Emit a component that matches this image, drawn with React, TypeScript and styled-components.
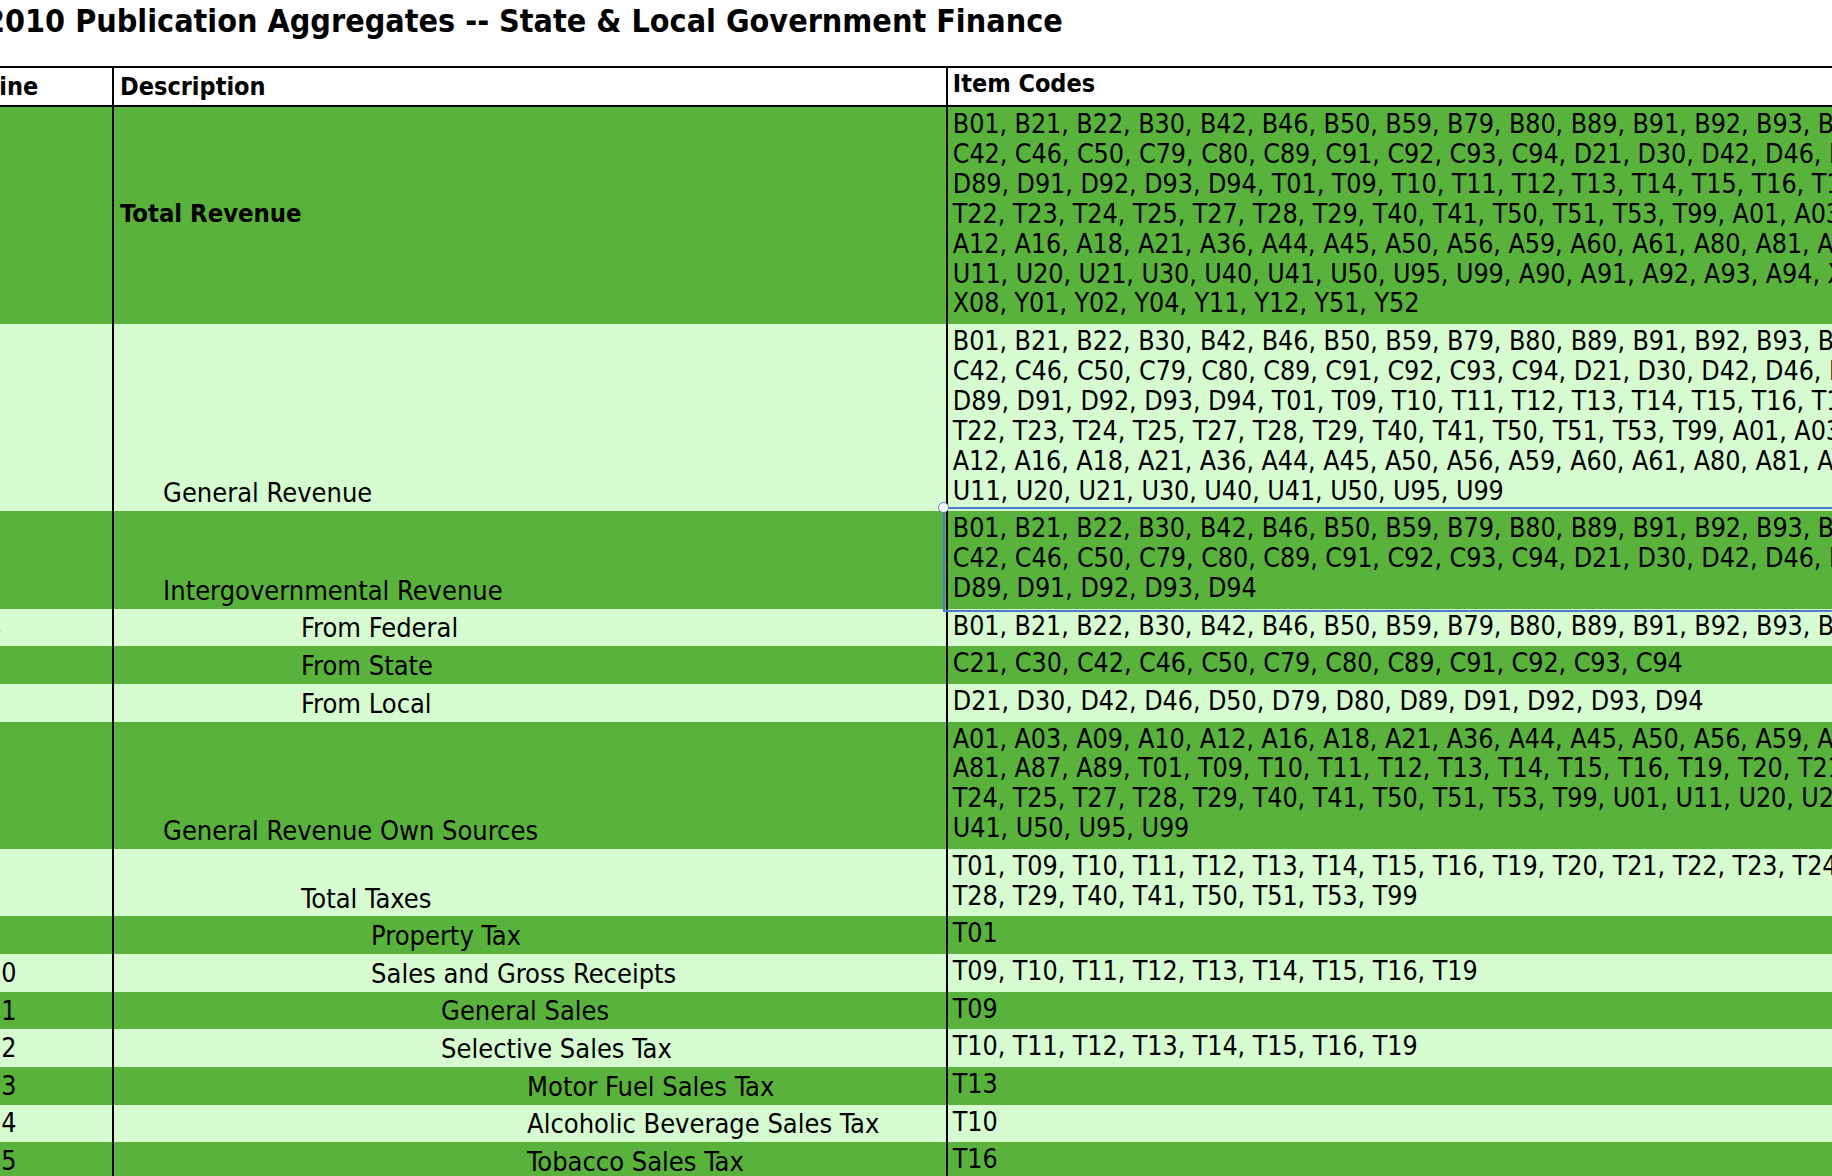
import React from "react";
import styled, { createGlobalStyle } from "styled-components";

const GlobalStyle = createGlobalStyle`
  html, body {
    margin: 0;
    padding: 0;
    background: #ffffff;
    overflow: hidden;
  }
  body {
    font-family: "DejaVu Sans Condensed", "DejaVu Sans", sans-serif;
    color: #000;
  }
`;

const Page = styled.div`
  width: 100vw;
  height: 100vh;
  overflow: hidden;
`;

const Sheet = styled.div`
  margin-left: -21px;
  width: 2600px;
`;

const Title = styled.h1`
  margin: 1px 0 25px 6px;
  font-family: "DejaVu Sans Condensed", "DejaVu Sans", sans-serif;
  font-weight: bold;
  font-size: 32px;
  line-height: 40px;
  white-space: nowrap;
`;

const Table = styled.table`
  border-collapse: collapse;
  table-layout: fixed;
  width: 2469px;
  font-family: "DejaVu Sans Condensed", "DejaVu Sans", sans-serif;
  font-size: 26px;
  line-height: 29.92px;
`;

const Col = styled.col<{ $w: number }>`
  width: ${(p) => p.$w}px;
`;

const HeadCell = styled.th<{ $first?: boolean; $top?: boolean }>`
  text-align: left;
  font-weight: bold;
  font-size: 25px;
  border-top: 2px solid #000;
  border-bottom: 2px solid #000;
  border-left: ${(p) => (p.$first ? "none" : "2px solid #000")};
  vertical-align: ${(p) => (p.$top ? "top" : "bottom")};
  padding: ${(p) => (p.$top ? "1px 5px 6px" : "4px 6px 3px")};
  white-space: nowrap;
`;

const Row = styled.tr<{ $dark: boolean }>`
  background: ${(p) => (p.$dark ? "#58b23b" : "#d6fbd0")};
`;

const LineCell = styled.td`
  vertical-align: middle;
  padding: 0 7px;
  font-size: 26.6px;
  white-space: nowrap;
`;

const DescCell = styled.td<{ $indent: number; $bold?: boolean }>`
  border-left: 2px solid #000;
  vertical-align: ${(p) => (p.$bold ? "middle" : "bottom")};
  font-weight: ${(p) => (p.$bold ? "bold" : "normal")};
  font-size: ${(p) => (p.$bold ? "25.4px" : "27px")};
  padding: 0 7px 3px ${(p) => p.$indent}px;
  white-space: nowrap;
`;

const CodeCell = styled.td`
  position: relative;
  border-left: 2px solid #000;
  vertical-align: top;
  font-size: 26.6px;
  letter-spacing: -0.05px;
  padding: 2px 5px 5.7px;
`;

const CodeLine = styled.div`
  white-space: nowrap;
`;

const Selection = styled.div`
  position: absolute;
  top: -4px;
  left: -5px;
  right: -40px;
  bottom: -3px;
  border: 2px solid #4a7cc9;
  pointer-events: none;
`;

const Handle = styled.div`
  position: absolute;
  top: -7px;
  left: -7px;
  width: 9px;
  height: 9px;
  border-radius: 50%;
  background: #f4f6fb;
  border: 1.5px solid #6b7fb5;
`;

const INDENT = [6, 49, 187, 257, 327, 413];

const L1 = "B01, B21, B22, B30, B42, B46, B50, B59, B79, B80, B89, B91, B92, B93, B94, C21, C30,";
const L2 = "C42, C46, C50, C79, C80, C89, C91, C92, C93, C94, D21, D30, D42, D46, D50, D79, D80,";
const L3 = "D89, D91, D92, D93, D94, T01, T09, T10, T11, T12, T13, T14, T15, T16, T19, T20, T21,";
const L4 = "T22, T23, T24, T25, T27, T28, T29, T40, T41, T50, T51, T53, T99, A01, A03, A09, A10,";
const L5 = "A12, A16, A18, A21, A36, A44, A45, A50, A56, A59, A60, A61, A80, A81, A87, A89, U01,";

type RowData = {
  line: string;
  desc: string;
  level: number;
  bold?: boolean;
  selected?: boolean;
  codes: string[];
};

const ROWS: RowData[] = [
  {
    line: "1",
    desc: "Total Revenue",
    level: 0,
    bold: true,
    codes: [
      L1,
      L2,
      L3,
      L4,
      L5,
      "U11, U20, U21, U30, U40, U41, U50, U95, U99, A90, A91, A92, A93, A94, X01, X02, X05,",
      "X08, Y01, Y02, Y04, Y11, Y12, Y51, Y52",
    ],
  },
  {
    line: "2",
    desc: "General Revenue",
    level: 1,
    codes: [L1, L2, L3, L4, L5, "U11, U20, U21, U30, U40, U41, U50, U95, U99"],
  },
  {
    line: "3",
    desc: "Intergovernmental Revenue",
    level: 1,
    selected: true,
    codes: [L1, L2, "D89, D91, D92, D93, D94"],
  },
  {
    line: "4",
    desc: "From Federal",
    level: 2,
    codes: ["B01, B21, B22, B30, B42, B46, B50, B59, B79, B80, B89, B91, B92, B93, B94"],
  },
  {
    line: "5",
    desc: "From State",
    level: 2,
    codes: ["C21, C30, C42, C46, C50, C79, C80, C89, C91, C92, C93, C94"],
  },
  {
    line: "6",
    desc: "From Local",
    level: 2,
    codes: ["D21, D30, D42, D46, D50, D79, D80, D89, D91, D92, D93, D94"],
  },
  {
    line: "7",
    desc: "General Revenue Own Sources",
    level: 1,
    codes: [
      "A01, A03, A09, A10, A12, A16, A18, A21, A36, A44, A45, A50, A56, A59, A60, A61, A80,",
      "A81, A87, A89, T01, T09, T10, T11, T12, T13, T14, T15, T16, T19, T20, T21, T22, T23,",
      "T24, T25, T27, T28, T29, T40, T41, T50, T51, T53, T99, U01, U11, U20, U21, U30, U40,",
      "U41, U50, U95, U99",
    ],
  },
  {
    line: "8",
    desc: "Total Taxes",
    level: 2,
    codes: [
      "T01, T09, T10, T11, T12, T13, T14, T15, T16, T19, T20, T21, T22, T23, T24, T25, T27,",
      "T28, T29, T40, T41, T50, T51, T53, T99",
    ],
  },
  { line: "9", desc: "Property Tax", level: 3, codes: ["T01"] },
  {
    line: "10",
    desc: "Sales and Gross Receipts",
    level: 3,
    codes: ["T09, T10, T11, T12, T13, T14, T15, T16, T19"],
  },
  { line: "11", desc: "General Sales", level: 4, codes: ["T09"] },
  {
    line: "12",
    desc: "Selective Sales Tax",
    level: 4,
    codes: ["T10, T11, T12, T13, T14, T15, T16, T19"],
  },
  { line: "13", desc: "Motor Fuel Sales Tax", level: 5, codes: ["T13"] },
  { line: "14", desc: "Alcoholic Beverage Sales Tax", level: 5, codes: ["T10"] },
  { line: "15", desc: "Tobacco Sales Tax", level: 5, codes: ["T16"] },
  { line: "16", desc: "Amusements Sales Tax", level: 5, codes: ["T11"] },
];

export default function App() {
  return (
    <Page>
      <GlobalStyle />
      <Sheet>
        <Title>2010 Publication Aggregates -- State &amp; Local Government Finance</Title>
        <Table>
          <colgroup>
            <Col $w={134} />
            <Col $w={833} />
            <Col $w={1500} />
          </colgroup>
          <thead>
            <tr>
              <HeadCell $first>Line</HeadCell>
              <HeadCell>Description</HeadCell>
              <HeadCell $top>Item Codes</HeadCell>
            </tr>
          </thead>
          <tbody>
            {ROWS.map((r, i) => (
              <Row key={r.line} $dark={i % 2 === 0}>
                <LineCell>{r.line}</LineCell>
                <DescCell $indent={INDENT[r.level]} $bold={r.bold}>
                  {r.desc}
                </DescCell>
                <CodeCell>
                  {r.codes.map((c, j) => (
                    <CodeLine key={j}>{c}</CodeLine>
                  ))}
                  {r.selected && (
                    <Selection>
                      <Handle />
                    </Selection>
                  )}
                </CodeCell>
              </Row>
            ))}
          </tbody>
        </Table>
      </Sheet>
    </Page>
  );
}
